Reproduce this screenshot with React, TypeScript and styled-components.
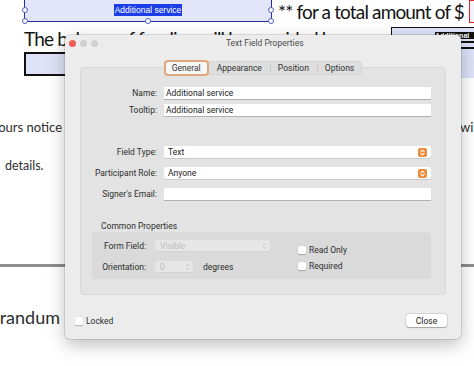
import React from "react";
import styled, { createGlobalStyle } from "styled-components";

const GlobalStyle = createGlobalStyle`
  html, body { margin: 0; padding: 0; background: #fff; }
  body { overflow: hidden; }
  * { box-sizing: border-box; }
`;

const Page = styled.div`
  position: relative;
  width: 474px;
  height: 366px;
  overflow: hidden;
  background: #fff;
  font-family: Lato, "Open Sans", sans-serif;
  color: #141414;
`;

const Doc = styled.div`
  display: flex;
  flex-direction: column;
  white-space: nowrap;
`;

/* ---------- document ---------- */
const FieldLine = styled.div`
  display: flex;
  align-items: flex-start;
  height: 24px;
`;

const SelectedField = styled.div`
  position: relative;
  flex: 0 0 248px;
  height: 24px;
  margin: -2px 0 0 24px;
  border: 1.5px solid #1f2d9e;
  background: #e3e6fb;
  display: flex;
  align-items: center;
  justify-content: center;
`;

const Handle = styled.span<{ $x: number; $y: number }>`
  position: absolute;
  left: ${(p) => p.$x}%;
  top: ${(p) => p.$y}%;
  width: 6px;
  height: 6px;
  border-radius: 50%;
  background: #fff;
  border: 1px solid #5563b8;
  transform: translate(-50%, -50%);
`;

const FieldText = styled.span<{ $bg: string }>`
  font-family: "Liberation Sans", Arial, sans-serif;
  font-size: 8.5px;
  line-height: 12px;
  padding: 0 1px;
  background: ${(p) => p.$bg};
  color: #fff;
`;

const BigText = styled.span<{ $indent?: number }>`
  flex-shrink: 0;
  font-size: 19px;
  line-height: 24px;
  letter-spacing: -0.85px;
  margin-left: ${(p) => p.$indent ?? 0}px;
`;

const RedField = styled.div`
  flex: 0 0 30px;
  height: 23px;
  margin-left: 5px;
  border: 1.5px solid #e0262a;
  background: #f3f3fd;
`;

const BalanceRow = styled.div`
  display: flex;
  align-items: flex-start;
  margin-top: 3px;
`;

const LeftCol = styled.div`
  flex: 0 0 391px;
  display: flex;
  flex-direction: column;
  overflow: hidden;
`;

const BlankField = styled.div`
  width: 330px;
  height: 24px;
  margin: 1px 0 0 24px;
  border: 2px solid #111;
  background: #dde2f8;
`;

const TableField = styled.div`
  flex: 0 0 90px;
  height: 51px;
  border-top: 1.5px solid #111;
  border-left: 1.5px solid #111;
  background: #dde2f8;
  display: flex;
  flex-direction: column;
  padding-top: 4px;
`;

const TableCaption = styled.div`
  display: flex;
  justify-content: flex-end;
  height: 7px;
  overflow: hidden;
`;

const TinyLabel = styled.span`
  font-family: "Liberation Sans", Arial, sans-serif;
  font-size: 7px;
  line-height: 7px;
  font-weight: 700;
  background: #111;
  color: #fff;
  width: 46px;
`;

const Bar = styled.div<{ $h: number; $gap: number }>`
  height: ${(p) => p.$h}px;
  margin-top: ${(p) => p.$gap}px;
  background: #111;
`;

const ClipLine = styled.div<{ $top: number; $size: number; $lh: number }>`
  display: grid;
  grid-template-columns: auto 1fr;
  column-gap: 4px;
  margin-top: ${(p) => p.$top}px;
  font-size: ${(p) => p.$size}px;
  line-height: ${(p) => p.$lh}px;
  color: #2e2e2e;
`;

const LeftClip = styled.div<{ $w: number }>`
  width: ${(p) => p.$w}px;
  overflow: hidden;
  display: flex;
  justify-content: flex-end;
`;

const Hidden = styled.div<{ $w: number }>`
  width: ${(p) => p.$w}px;
  overflow: hidden;
`;

const SmallLine = styled.div<{ $top: number; $indent: number }>`
  margin: ${(p) => p.$top}px 0 0 ${(p) => p.$indent}px;
  font-size: 12.5px;
  line-height: 16px;
  color: #2e2e2e;
`;

const Rule = styled.div`
  height: 3px;
  margin-top: 90px;
  background: #8d8d8d;
`;

/* ---------- dialog ---------- */
const Dialog = styled.div`
  position: absolute;
  left: 65px;
  top: 35px;
  width: 396px;
  height: 304px;
  background: #ececec;
  border-radius: 5px;
  box-shadow: 0 0 0 0.5px rgba(0, 0, 0, 0.22), 0 6px 18px rgba(0, 0, 0, 0.25);
  font-family: Roboto, "Liberation Sans", sans-serif;
  font-size: 8.5px;
  color: #2a2a2a;
  display: flex;
  flex-direction: column;
  overflow: hidden;
  white-space: nowrap;
`;

const TitleBar = styled.div`
  height: 16px;
  display: grid;
  grid-template-columns: 1fr auto 1fr;
  align-items: center;
  padding-left: 3.5px;
`;

const Lights = styled.div`
  display: flex;
  gap: 4px;
`;

const Light = styled.span<{ $c: string }>`
  width: 7px;
  height: 7px;
  border-radius: 50%;
  background: ${(p) => p.$c};
`;

const Title = styled.div`
  color: #4d4d4d;
`;

const Body = styled.div`
  display: flex;
  flex-direction: column;
  padding: 0 15px;
`;

const TabBar = styled.div`
  align-self: center;
  position: relative;
  z-index: 1;
  margin: 10px 0 -8px;
  height: 14px;
  display: flex;
  align-items: center;
  background: #dedede;
  border-radius: 4px;
  box-shadow: inset 0 0 0 0.5px rgba(0, 0, 0, 0.08);
`;

const Tab = styled.div<{ $active?: boolean; $sep?: boolean }>`
  position: relative;
  height: ${(p) => (p.$active ? 16 : 14)}px;
  display: flex;
  align-items: center;
  padding: 0 ${(p) => (p.$active ? 6 : 8)}px;
  color: #333;
  background: ${(p) => (p.$active ? "#f7f7f7" : "transparent")};
  border: ${(p) => (p.$active ? "2px solid #e2a67e" : "none")};
  border-radius: 4px;
  &::before {
    content: "";
    display: ${(p) => (p.$sep ? "block" : "none")};
    position: absolute;
    left: 0;
    top: 3px;
    bottom: 3px;
    width: 1px;
    background: #c9c9c9;
  }
`;

const Panel = styled.div`
  height: 228px;
  background: #e3e3e3;
  border: 1px solid #d8d8d8;
  border-radius: 4px;
  display: flex;
  flex-direction: column;
`;

const FormGrid = styled.div<{ $top: number; $gap: number }>`
  display: grid;
  grid-template-columns: 72px 1fr;
  column-gap: 7px;
  row-gap: ${(p) => p.$gap}px;
  align-items: center;
  margin-top: ${(p) => p.$top}px;
  padding: 0 14px 0 4px;
`;

const Label = styled.div`
  text-align: right;
  color: #2e2e2e;
`;

const TextBox = styled.div`
  height: 12px;
  display: flex;
  align-items: center;
  padding: 0 2px;
  background: #fff;
  box-shadow: 0 0.5px 0.5px rgba(0, 0, 0, 0.22);
  color: #222;
`;

const SelectBox = styled.div`
  height: 12px;
  display: flex;
  align-items: center;
  justify-content: space-between;
  padding: 0 4px 0 4px;
  background: #fff;
  border-radius: 2px;
  box-shadow: 0 0.5px 0.5px rgba(0, 0, 0, 0.22);
  color: #222;
`;

const Stepper = styled.span`
  width: 9px;
  height: 9px;
  border-radius: 2px;
  background: #f08a38;
  display: flex;
  align-items: center;
  justify-content: center;
`;

const GroupTitle = styled.div`
  margin: 21px 0 0 20px;
  line-height: 10px;
  color: #2e2e2e;
`;

const GroupBox = styled.div`
  height: 47px;
  margin: 1px 14px 0 11px;
  background: #dadada;
  border-radius: 3px;
  display: flex;
  padding-left: 8px;
`;

const GroupGrid = styled.div`
  display: grid;
  grid-template-columns: 46px auto;
  column-gap: 9px;
  row-gap: 10px;
  align-items: center;
  align-content: start;
  padding-top: 8px;
`;

const DimSelect = styled.div<{ $w: number }>`
  width: ${(p) => p.$w}px;
  height: 11px;
  display: flex;
  align-items: center;
  justify-content: space-between;
  padding: 0 3px 0 5px;
  background: #e6e6e6;
  border-radius: 2px;
  box-shadow: 0 0.5px 0.5px rgba(0, 0, 0, 0.06);
  color: #bdbdbd;
`;

const Inline = styled.div`
  display: flex;
  align-items: center;
  gap: 10px;
`;

const Checks = styled.div`
  display: flex;
  flex-direction: column;
  gap: 8px;
  margin-left: 28px;
  padding-top: 14px;
`;

const CheckRow = styled.label`
  display: flex;
  align-items: center;
  gap: 3px;
  height: 8px;
  color: #2e2e2e;
`;

const Box = styled.span`
  width: 8px;
  height: 8px;
  border-radius: 1.5px;
  background: #fff;
  box-shadow: 0 0.5px 1px rgba(0, 0, 0, 0.25);
`;

const Footer = styled.div`
  margin-top: 19px;
  height: 13px;
  display: flex;
  align-items: center;
  justify-content: space-between;
  padding: 0 14px 0 10px;
`;

const Button = styled.button`
  width: 41px;
  height: 13px;
  padding: 0;
  border: none;
  border-radius: 3px;
  background: #fff;
  box-shadow: 0 0 0 0.5px rgba(0, 0, 0, 0.15), 0 0.5px 1px rgba(0, 0, 0, 0.25);
  font: inherit;
  color: #222;
`;

const OrangeArrows = () => (
  <svg width="9" height="9" viewBox="0 0 9 9">
    <path d="M2.9 3.7 L4.5 2.1 L6.1 3.7 M2.9 5.3 L4.5 6.9 L6.1 5.3" stroke="#fff" strokeWidth="1.1" fill="none" strokeLinecap="round" strokeLinejoin="round" />
  </svg>
);

const GrayArrows = () => (
  <svg width="5" height="8" viewBox="0 0 5 8">
    <path d="M1 3 L2.5 1.5 L4 3 M1 5 L2.5 6.5 L4 5" stroke="#bcbcbc" strokeWidth="0.8" fill="none" />
  </svg>
);

export default function App() {
  return (
    <Page>
      <GlobalStyle />
      <Doc>
        <FieldLine>
          <SelectedField>
            <FieldText $bg="#1c3ee6">Additional service</FieldText>
            <Handle $x={0} $y={50} />
            <Handle $x={0} $y={100} />
            <Handle $x={50} $y={100} />
            <Handle $x={100} $y={50} />
            <Handle $x={100} $y={100} />
          </SelectedField>
          <BigText $indent={6}>** for a total amount of $</BigText>
          <RedField />
        </FieldLine>
        <BalanceRow>
          <LeftCol>
            <BigText $indent={24}>The balance of funding will be provided by</BigText>
            <BlankField />
          </LeftCol>
          <TableField>
            <TableCaption>
              <TinyLabel>Additional</TinyLabel>
            </TableCaption>
            <Bar $h={2} $gap={2} />
            <Bar $h={2} $gap={4} />
          </TableField>
        </BalanceRow>
        <ClipLine $top={41} $size={13} $lh={16}>
          <LeftClip $w={62}>with 48 hours notice</LeftClip>
          <Inline>
            <Hidden $w={384}>prior to the event, the organizer</Hidden>
            <span>will</span>
          </Inline>
        </ClipLine>
        <SmallLine $top={23} $indent={5}>details.</SmallLine>
        <Rule />
        <ClipLine $top={39} $size={18} $lh={22}>
          <LeftClip $w={60}>Memorandum</LeftClip>
        </ClipLine>
      </Doc>

      <Dialog>
        <TitleBar>
          <Lights>
            <Light $c="#ee5d55" />
            <Light $c="#d0d0d0" />
            <Light $c="#d0d0d0" />
          </Lights>
          <Title>Text Field Properties</Title>
          <span />
        </TitleBar>
        <Body>
          <TabBar>
            <Tab $active>General</Tab>
            <Tab>Appearance</Tab>
            <Tab $sep>Position</Tab>
            <Tab $sep>Options</Tab>
          </TabBar>
          <Panel>
            <FormGrid $top={19} $gap={5}>
              <Label>Name:</Label>
              <TextBox>Additional service</TextBox>
              <Label>Tooltip:</Label>
              <TextBox>Additional service</TextBox>
            </FormGrid>
            <FormGrid $top={30} $gap={9}>
              <Label>Field Type:</Label>
              <SelectBox>
                <span>Text</span>
                <Stepper><OrangeArrows /></Stepper>
              </SelectBox>
              <Label>Participant Role:</Label>
              <SelectBox>
                <span>Anyone</span>
                <Stepper><OrangeArrows /></Stepper>
              </SelectBox>
              <Label>Signer's Email:</Label>
              <TextBox />
            </FormGrid>
            <GroupTitle>Common Properties</GroupTitle>
            <GroupBox>
              <GroupGrid>
                <Label>Form Field:</Label>
                <DimSelect $w={115}>
                  <span>Visible</span>
                  <GrayArrows />
                </DimSelect>
                <Label>Orientation:</Label>
                <Inline>
                  <DimSelect $w={38}>
                    <span>0</span>
                    <GrayArrows />
                  </DimSelect>
                  <span>degrees</span>
                </Inline>
              </GroupGrid>
              <Checks>
                <CheckRow><Box />Read Only</CheckRow>
                <CheckRow><Box />Required</CheckRow>
              </Checks>
            </GroupBox>
          </Panel>
        </Body>
        <Footer>
          <CheckRow><Box />Locked</CheckRow>
          <Button>Close</Button>
        </Footer>
      </Dialog>
    </Page>
  );
}
